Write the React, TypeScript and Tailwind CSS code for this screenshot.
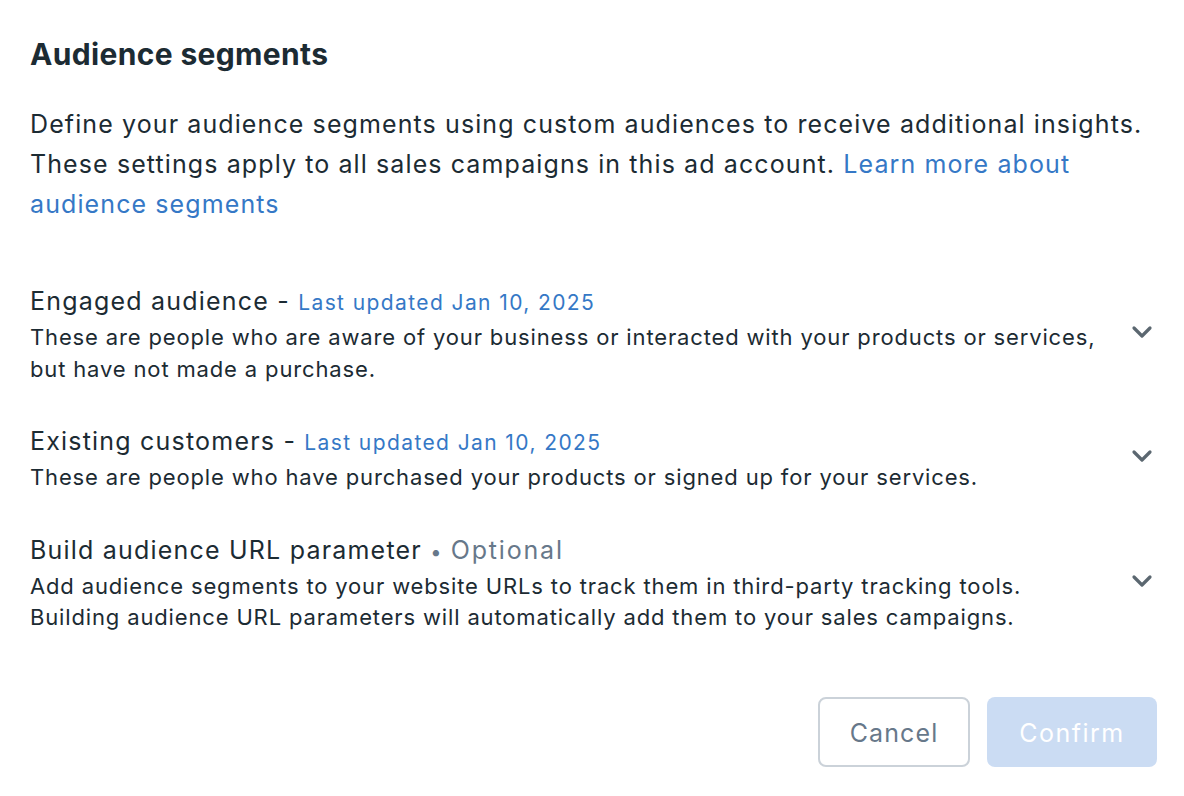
const sections = [
  {
    title: "Engaged audience",
    meta: "Last updated Jan 10, 2025",
    kind: "updated",
    lines: [
      "These are people who are aware of your business or interacted with your products or services,",
      "but have not made a purchase.",
    ],
  },
  {
    title: "Existing customers",
    meta: "Last updated Jan 10, 2025",
    kind: "updated",
    lines: ["These are people who have purchased your products or signed up for your services."],
  },
  {
    title: "Build audience URL parameter",
    meta: "Optional",
    kind: "optional",
    lines: [
      "Add audience segments to your website URLs to track them in third-party tracking tools.",
      "Building audience URL parameters will automatically add them to your sales campaigns.",
    ],
  },
];

function Chevron() {
  return (
    <svg width="22" height="14" viewBox="0 0 22 14" fill="none" className="mr-[4px] mb-[5px] shrink-0">
      <path
        d="M3 3l8 8 8-8"
        stroke="#5b6770"
        strokeWidth="3.2"
        strokeLinecap="round"
        strokeLinejoin="round"
      />
    </svg>
  );
}

export default function App() {
  return (
    <div
      className="flex h-[796px] w-[1184px] flex-col bg-white pl-[30px] pr-[27px] text-[#1c2b33]"
      style={{ fontFamily: "Inter, 'Noto Sans', sans-serif" }}
    >
      <h1 className="pt-[35px] text-[30px] font-bold leading-[38px] tracking-[0.35px]">
        Audience segments
      </h1>

      <p className="mt-[31px] text-[25px] leading-[40px] tracking-[1.1px]">
        Define your audience segments using custom audiences to receive additional insights.
        <br />
        These settings apply to all sales campaigns in this ad account.{" "}
        <a href="#" className="text-[#3578c6]">
          Learn more about
          <br />
          audience segments
        </a>
      </p>

      <div className="mt-[60px] flex flex-col gap-[39px]">
        {sections.map((s) => (
          <div key={s.title} className="flex items-center">
            <div className="flex-1">
              <div className="text-[25px] leading-[34px] tracking-[1.2px]">
                {s.title}
                {s.kind === "updated" ? (
                  <>
                    {" - "}
                    <span className="text-[21px] tracking-[1.4px] text-[#3578c6]">{s.meta}</span>
                  </>
                ) : (
                  <span className="text-[#67788a]">
                    {" "}
                    <span className="text-[20px]">•</span>{" "}
                    <span className="tracking-[1.8px]">{s.meta}</span>
                  </span>
                )}
              </div>
              <div className="mt-[2px] text-[22px] leading-[31.5px] tracking-[0.85px]">
                {s.lines.map((l) => (
                  <div key={l}>{l}</div>
                ))}
              </div>
            </div>
            <Chevron />
          </div>
        ))}
      </div>

      <div className="mt-auto mb-[29px] flex justify-end gap-[17px]">
        <button className="h-[70px] w-[152px] rounded-[8px] border-2 border-[#cbd2d9] pt-[4px] text-[25px] tracking-[1.1px] text-[#67788a]">
          Cancel
        </button>
        <button className="h-[70px] w-[170px] rounded-[8px] bg-[#cbdcf3] pt-[4px] text-[25px] tracking-[1.5px] text-white">
          Confirm
        </button>
      </div>
    </div>
  );
}
